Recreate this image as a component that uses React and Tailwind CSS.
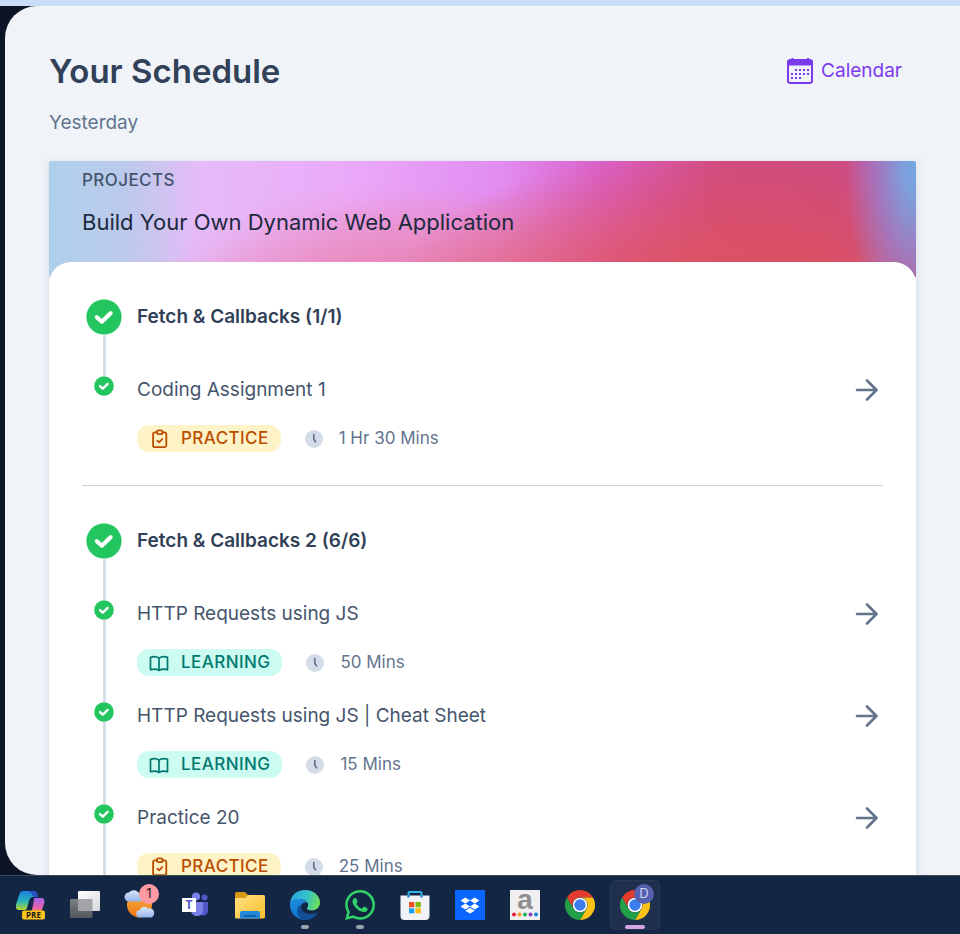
import React from "react";

const sections = [
  {
    title: "Fetch & Callbacks (1/1)",
    items: [{ title: "Coding Assignment 1", kind: "practice", time: "1 Hr 30 Mins" }],
  },
  {
    title: "Fetch & Callbacks 2 (6/6)",
    items: [
      { title: "HTTP Requests using JS", kind: "learning", time: "50 Mins" },
      { title: "HTTP Requests using JS | Cheat Sheet", kind: "learning", time: "15 Mins" },
      { title: "Practice 20", kind: "practice", time: "25 Mins" },
    ],
  },
];

function CalendarIcon() {
  const dots = [
    [9, 12], [13, 12], [17, 12], [21, 12],
    [5, 16], [9, 16], [13, 16], [17, 16], [21, 16],
    [5, 20], [9, 20], [13, 20],
  ];
  return (
    <svg viewBox="0 0 26 26" className="h-[26px] w-[26px]" aria-hidden="true">
      <rect x="1" y="2" width="24" height="23" rx="2.5" fill="none" stroke="#7c3aed" strokeWidth="2" />
      <path d="M0 7.500V4a2.500 2.500 0 0 1 2.500-2.500h21A2.500 2.500 0 0 1 26 4v3.500z" fill="#7c3aed" />
      <path d="M5.500 0v3M21 0v3" stroke="#7c3aed" strokeWidth="2" />
      {dots.map(([x, y]) => (
        <rect key={x + "-" + y} x={x - 1} y={y - 1} width="2" height="2" fill="#7c3aed" />
      ))}
    </svg>
  );
}

function Check({ className }) {
  return (
    <svg viewBox="0 0 36 36" className={className} aria-hidden="true">
      <circle cx="18" cy="18" r="17.6" fill="#22c55e" />
      <path d="M10.800 18.200l5 4.600 8.800-8.600" fill="none" stroke="#fff" strokeWidth="4.200" strokeLinecap="round" strokeLinejoin="round" />
    </svg>
  );
}

function ClipboardIcon() {
  return (
    <svg viewBox="0 0 18 20" className="h-5 w-[18px]" fill="none" stroke="currentColor" strokeWidth="1.800" strokeLinecap="round" strokeLinejoin="round" aria-hidden="true">
      <path d="M5.800 3.300H3.900A1.800 1.800 0 0 0 2.100 5.100v11.300a1.800 1.800 0 0 0 1.800 1.800h9.600a1.800 1.800 0 0 0 1.800-1.800V5.100a1.800 1.800 0 0 0-1.800-1.800h-1.900" />
      <rect x="5.800" y="1.300" width="5.800" height="3.800" rx="1.700" />
      <path d="M6.300 11.600l1.800 1.800 3.200-3.400" />
    </svg>
  );
}

function BookIcon() {
  return (
    <svg viewBox="0 0 20 18" className="h-[18px] w-5" fill="none" stroke="currentColor" strokeWidth="1.700" strokeLinejoin="round" aria-hidden="true">
      <path d="M10 4.200C8 2.600 4 2.400 1.500 3.200v12.600c2.500-.8 6.500-.6 8.500.6 2-1.200 6-1.400 8.500-.6V3.200C16 2.400 12 2.600 10 4.200zM10 4.200v12.200" />
    </svg>
  );
}

function ClockIcon() {
  return (
    <svg viewBox="0 0 18 18" className="h-[18px] w-[18px]" aria-hidden="true">
      <circle cx="9" cy="9" r="9" fill="#d3dce8" />
      <path d="M8.800 4.500v5l1.800 2.300" fill="none" stroke="#64748b" strokeWidth="1.700" strokeLinecap="round" strokeLinejoin="round" />
    </svg>
  );
}

function ArrowIcon() {
  return (
    <svg viewBox="0 0 24 24" className="h-6 w-6" fill="none" stroke="#64748b" strokeWidth="2.600" strokeLinecap="round" strokeLinejoin="round" aria-hidden="true">
      <path d="M2 12h19.500M12 2.500l9.500 9.500-9.500 9.500" />
    </svg>
  );
}

function Badge({ kind }) {
  const practice = kind === "practice";
  return (
    <span
      className={
        "flex h-[27px] items-center gap-3 rounded-xl text-[17px] font-medium tracking-wide " +
        (practice ? "bg-amber-100 pr-3 pl-3.5 text-amber-700" : "bg-teal-100 pr-3 pl-3 text-teal-700")
      }
    >
      {practice ? <ClipboardIcon /> : <BookIcon />}
      {practice ? "PRACTICE" : "LEARNING"}
    </span>
  );
}

function Item({ item, last }) {
  return (
    <li className="flex">
      <div className="flex w-11 shrink-0 flex-col items-center">
        <Check className="h-5 w-5" />
        {!last && <span className="w-[3px] flex-1 bg-[#d6dee8]" />}
      </div>
      <div className={"min-w-0 flex-1 pl-[11px] " + (last ? "" : "pb-[26px]")}>
        <div className="flex h-7 items-center justify-between pr-1">
          <h4 className="text-[19px] leading-7 text-slate-600">{item.title}</h4>
          <a href="#item" aria-label={"Open " + item.title}>
            <ArrowIcon />
          </a>
        </div>
        <div className="mt-[21px] flex items-center gap-6">
          <Badge kind={item.kind} />
          <span className="flex items-center gap-4 text-[17px] leading-[27px] text-slate-500">
            <ClockIcon />
            {item.time}
          </span>
        </div>
      </div>
    </li>
  );
}

function Section({ section, open }) {
  return (
    <section className={"pt-[37px] " + (open ? "" : "border-b border-[#cfd0d3] pb-[33px]")}>
      <div className="flex h-[77px]">
        <div className="flex w-11 shrink-0 flex-col items-center">
          <Check className="h-9 w-9" />
          <span className="w-[3px] flex-1 bg-[#d6dee8]" />
        </div>
        <h3 className="pl-[11px] text-[19px] leading-9 font-semibold text-slate-700">{section.title}</h3>
      </div>
      <ul>
        {section.items.map((item, i) => (
          <Item key={item.title} item={item} last={!open && i === section.items.length - 1} />
        ))}
      </ul>
    </section>
  );
}

function CopilotIcon() {
  return (
    <svg viewBox="0 0 32 32" className="h-8 w-8" aria-hidden="true">
      <defs>
        <linearGradient id="cpA" x1="0" y1="0" x2="0" y2="1">
          <stop offset="0" stopColor="#1c7fe0" />
          <stop offset="0.550" stopColor="#2bb5b8" />
          <stop offset="1" stopColor="#b9d630" />
        </linearGradient>
        <linearGradient id="cpB" x1="0" y1="0" x2="0" y2="1">
          <stop offset="0" stopColor="#a566f0" />
          <stop offset="0.600" stopColor="#e360b0" />
          <stop offset="1" stopColor="#f58a50" />
        </linearGradient>
      </defs>
      <path d="M9 2h10c3 0 4 2 5 6h-5c-2 0-3 1-4 4l-2 7c-.6 1.500-1.500 2-3 2H5c-3 0-3.600-2.500-2.800-6L5 6c.8-2.500 2-4 4-4z" fill="url(#cpA)" />
      <path d="M14 2h5c3 0 4 2 5 6h-4c-2-1-2-5-6-6z" fill="#2450c8" />
      <path d="M20 9h7c3 0 4 2 3.300 5L28 21c-.6 2-2 3-4 3h-7c1-2 3-13 3-15z" fill="url(#cpB)" />
      <rect x="8" y="21.500" width="23" height="9" rx="2" fill="#fcc419" />
      <text x="19.500" y="29" textAnchor="middle" fontSize="8" fontWeight="700" fontFamily="Open Sans, sans-serif" fill="#1b1b1b">PRE</text>
    </svg>
  );
}

function TaskViewIcon() {
  return (
    <svg viewBox="0 0 30 30" className="h-[30px] w-[30px]" aria-hidden="true">
      <defs>
        <linearGradient id="tvA" x1="0" y1="0" x2="1" y2="1">
          <stop offset="0" stopColor="#ffffff" />
          <stop offset="1" stopColor="#d5d7da" />
        </linearGradient>
        <linearGradient id="tvB" x1="0" y1="0" x2="0" y2="1">
          <stop offset="0" stopColor="#7c7e82" />
          <stop offset="1" stopColor="#54575c" />
        </linearGradient>
      </defs>
      <rect x="0" y="9" width="22.500" height="19" rx="1" fill="url(#tvB)" />
      <rect x="8" y="1" width="22" height="20" rx="1" fill="url(#tvA)" />
      <path d="M8 9h14.500v12H8z" fill="#a2a4a7" />
    </svg>
  );
}

function WeatherIcon() {
  return (
    <svg viewBox="0 0 32 32" className="h-8 w-8" aria-hidden="true">
      <defs>
        <linearGradient id="wA" x1="0" y1="0" x2="0" y2="1">
          <stop offset="0" stopColor="#fbb040" />
          <stop offset="1" stopColor="#ea7718" />
        </linearGradient>
        <linearGradient id="wB" x1="0" y1="0" x2="0" y2="1">
          <stop offset="0" stopColor="#dbe8fb" />
          <stop offset="1" stopColor="#94b5ea" />
        </linearGradient>
      </defs>
      <circle cx="15.500" cy="16" r="12.500" fill="url(#wA)" />
      <path d="M5 12.500a4.500 4.500 0 0 1 0-9A6 6 0 0 1 15 4.500a4 4 0 0 1 1 8z" fill="url(#wB)" />
      <path d="M16 28.500a3.700 3.700 0 0 1 0-7.400 4.500 4.500 0 0 1 8-1.500 4.500 4.500 0 0 1 3 8.900z" fill="url(#wB)" />
    </svg>
  );
}

function TeamsIcon() {
  return (
    <svg viewBox="0 0 30 30" className="h-[30px] w-[30px]" aria-hidden="true">
      <circle cx="16" cy="6.500" r="4" fill="#7b83eb" />
      <circle cx="24.500" cy="7.500" r="3" fill="#5059c9" />
      <path d="M19 12h9v8.500a5 5 0 0 1-9 3z" fill="#5059c9" />
      <path d="M11 12h12v8c0 4-3 6-6 6s-6-2-6-6z" fill="#7b83eb" />
      <rect x="2" y="8" width="14" height="14" rx="0.500" fill="#fff" />
      <text x="9" y="19" textAnchor="middle" fontSize="12" fontWeight="700" fontFamily="Open Sans, sans-serif" fill="#5059c9">T</text>
    </svg>
  );
}

function FolderIcon() {
  return (
    <svg viewBox="0 0 30 30" className="h-[30px] w-[30px]" aria-hidden="true">
      <defs>
        <linearGradient id="fA" x1="0" y1="0" x2="1" y2="1">
          <stop offset="0" stopColor="#ffe083" />
          <stop offset="1" stopColor="#fbc02f" />
        </linearGradient>
      </defs>
      <path d="M0 4a2 2 0 0 1 2-2h8l3 3h15a2 2 0 0 1 2 2v4H0z" fill="#d99a13" />
      <path d="M0 8h10l3-3h15a2 2 0 0 1 2 2v20a1.500 1.500 0 0 1-1.500 1.500h-27A1.500 1.500 0 0 1 0 27z" fill="url(#fA)" />
      <path d="M5 28.500V23a2 2 0 0 1 2-2h16a2 2 0 0 1 2 2v5.500z" fill="#2386d8" />
      <rect x="9" y="25" width="12" height="1.800" rx="0.900" fill="#0f5ca6" />
    </svg>
  );
}

function EdgeIcon() {
  return (
    <svg viewBox="0 0 30 30" className="h-[30px] w-[30px]" aria-hidden="true">
      <defs>
        <linearGradient id="eA" x1="0" y1="0.300" x2="1" y2="0.500">
          <stop offset="0" stopColor="#2aa5e0" />
          <stop offset="0.550" stopColor="#35c1c8" />
          <stop offset="1" stopColor="#6fe05a" />
        </linearGradient>
        <linearGradient id="eB" x1="0" y1="0" x2="0.500" y2="1">
          <stop offset="0" stopColor="#1c8fe0" />
          <stop offset="1" stopColor="#1173cf" />
        </linearGradient>
      </defs>
      <path d="M0 13C1 5 7 0 15 0c9 0 15 6 15 12.500 0 5-4 8-8.500 8-4 0-5-1.500-4.500-2.500 1-1.500 1.500-3 .5-5C15 8.500 5 7 0 13z" fill="url(#eA)" />
      <path d="M0 13c4-6 14-5 17.500 0-3-1.500-6.500.5-7 4.500-.5 5 3 9.500 9.500 9.500-2 2-4 3-6 3C6 29 0 23 0 15z" fill="url(#eB)" />
      <path d="M10.500 14.500c0 6.500 4 9.500 10 9.500 3.500 0 6.500-2 7-1.500.8.700-4.500 7.500-12 7.500-8 0-11-11-5-15.500z" fill="#134f96" />
      <path d="M17.500 13c1 2 .5 3.500-.5 5-.5 1 .5 2.500 4.500 2.500l-4 1.500c-4-1-6-4-5-6.500.7-2 3-3 5-2.500z" fill="#132745" />
    </svg>
  );
}

function WhatsAppIcon() {
  return (
    <svg viewBox="0 0 24 24" className="h-[30px] w-[30px]" fill="#2fd366" aria-hidden="true">
      <path d="M17.472 14.382c-.297-.149-1.758-.867-2.030-.967-.273-.099-.471-.148-.670.150-.197.297-.767.966-.940 1.164-.173.199-.347.223-.644.075-.297-.150-1.255-.463-2.390-1.475-.883-.788-1.480-1.761-1.653-2.059-.173-.297-.018-.458.130-.606.134-.133.298-.347.446-.520.149-.174.198-.298.298-.497.099-.198.050-.371-.025-.520-.075-.149-.669-1.612-.916-2.207-.242-.579-.487-.500-.669-.510-.173-.008-.371-.010-.570-.010-.198 0-.520.074-.792.372-.272.297-1.040 1.016-1.040 2.479 0 1.462 1.065 2.875 1.213 3.074.149.198 2.096 3.200 5.077 4.487.709.306 1.262.489 1.694.625.712.227 1.360.195 1.871.118.571-.085 1.758-.719 2.006-1.413.248-.694.248-1.289.173-1.413-.074-.124-.272-.198-.570-.347m-5.421 7.403h-.004a9.870 9.870 0 0 1-5.031-1.378l-.361-.214-3.741.982.998-3.648-.235-.374a9.860 9.860 0 0 1-1.510-5.260c.001-5.450 4.436-9.884 9.888-9.884 2.640 0 5.122 1.030 6.988 2.898a9.825 9.825 0 0 1 2.893 6.994c-.003 5.450-4.437 9.884-9.885 9.884m8.413-18.297A11.815 11.815 0 0 0 12.050 0C5.495 0 .160 5.335.157 11.892c0 2.096.547 4.142 1.588 5.945L.057 24l6.305-1.654a11.882 11.882 0 0 0 5.683 1.448h.005c6.554 0 11.890-5.335 11.893-11.893a11.821 11.821 0 0 0-3.480-8.413z" />
    </svg>
  );
}

function StoreIcon() {
  return (
    <svg viewBox="0 0 30 30" className="h-[30px] w-[30px]" aria-hidden="true">
      <path d="M.5 5.500h29V26a4 4 0 0 1-4 4h-21a4 4 0 0 1-4-4z" fill="#f1f3f6" />
      <path d="M8.500 7V3a1 1 0 0 1 1-1h11a1 1 0 0 1 1 1v4" fill="none" stroke="#35b3ea" strokeWidth="2" />
      <path d="M8.500 7.500V5.500M21.500 7.500V5.500" stroke="#1a7fc4" strokeWidth="2" />
      <path d="M9 12h5.300v5.300H9z" fill="#f25022" />
      <path d="M15.500 12h5.300v5.300h-5.300z" fill="#7fba00" />
      <path d="M9 18.300h5.300v5H9z" fill="#1a9ff0" />
      <path d="M15.500 18.300h5.300v5h-5.300z" fill="#ffb900" />
    </svg>
  );
}

function DropboxIcon() {
  return (
    <svg viewBox="0 0 30 30" className="h-[30px] w-[30px]" aria-hidden="true">
      <rect width="30" height="30" fill="#0a66ff" />
      <path d="M10.300 7.500l4.700 3-4.700 3-4.700-3zM19.700 7.500l4.700 3-4.700 3-4.700-3zM10.300 13.500l4.700 3-4.700 3-4.700-3zM19.700 13.500l4.700 3-4.700 3-4.700-3zM15 17.700l4.700 3-4.700 2.800-4.700-2.800z" fill="#fff" />
    </svg>
  );
}

function LetterAIcon() {
  const colors = ["#e01b3c", "#f39a2b", "#1fae62", "#8a3fc0", "#1582d8"];
  return (
    <svg viewBox="0 0 30 30" className="h-[30px] w-[30px] overflow-visible" aria-hidden="true">
      <rect width="30" height="30" fill="#f0f0f0" />
      <text x="15" y="19" textAnchor="middle" fontSize="28" fontWeight="700" fontFamily="Liberation Sans, Arial, sans-serif" fill="#8f8f8f">a</text>
      {colors.map((c, i) => (
        <circle key={c} cx={4 + i * 5.5} cy="24.500" r="2" fill={c} />
      ))}
    </svg>
  );
}

function ChromeIcon() {
  return (
    <svg viewBox="0 0 30 30" className="h-[30px] w-[30px]" aria-hidden="true">
      <path d="M15 0a15 15 0 0 1 13 7.500H15a7.500 7.500 0 0 0-6.500 11.250L2 7.500A15 15 0 0 1 15 0z" fill="#e33b2e" />
      <path d="M28 7.500A15 15 0 0 1 15 30l6.500-11.250A7.500 7.500 0 0 0 15 7.500z" fill="#fbc116" />
      <path d="M2 7.500a15 15 0 0 0 13 22.500l6.500-11.250A7.500 7.500 0 0 1 8.500 18.750z" fill="#23a047" />
      <circle cx="15" cy="15" r="7.300" fill="#fff" />
      <circle cx="15" cy="15" r="5.700" fill="#3b7ded" />
    </svg>
  );
}

const apps = [
  { name: "Copilot", Icon: CopilotIcon },
  { name: "Task view", Icon: TaskViewIcon },
  { name: "Weather", Icon: WeatherIcon, badge: "1", badgeStyle: "bg-[#ff99a4] text-[#1b1b1b]" },
  { name: "Teams", Icon: TeamsIcon },
  { name: "File Explorer", Icon: FolderIcon },
  { name: "Edge", Icon: EdgeIcon, running: true },
  { name: "WhatsApp", Icon: WhatsAppIcon, running: true },
  { name: "Store", Icon: StoreIcon },
  { name: "Dropbox", Icon: DropboxIcon },
  { name: "Shopping", Icon: LetterAIcon },
  { name: "Chrome", Icon: ChromeIcon },
  { name: "Chrome profile", Icon: ChromeIcon, active: true, badge: "D", badgeStyle: "bg-[#5560ae] text-[#cfd3f2]" },
];

function Taskbar() {
  return (
    <nav aria-label="Taskbar" className="flex h-[59px] shrink-0 items-start gap-[5px] border-t border-[#3a4a55] bg-[#132745] pt-1 pl-[5px]">
      {apps.map(({ name, Icon, running, active, badge, badgeStyle }) => (
        <button
          key={name}
          type="button"
          aria-label={name}
          className={
            "relative flex h-[50px] w-[50px] items-center justify-center rounded-[5px] border " +
            (active ? "border-[#263852] bg-[#1e304c]" : "border-transparent")
          }
        >
          <Icon />
          {badge && (
            <span className={"absolute top-[3px] right-[5px] flex h-5 w-5 items-center justify-center rounded-full text-[13px] " + badgeStyle}>
              {badge}
            </span>
          )}
          {running && <span className="absolute bottom-0 h-1 w-2 rounded-full bg-[#9aa3b1]" />}
          {active && <span className="absolute bottom-0 h-1 w-5 rounded-full bg-[#d6a3e3]" />}
        </button>
      ))}
    </nav>
  );
}

export default function App() {
  return (
    <div className="flex h-screen flex-col overflow-hidden bg-[#0b1526] font-['Inter','Noto_Sans',sans-serif]">
      <div className="h-1.5 shrink-0 bg-[#cbdcf7]" />
      <main className="ml-[5px] min-h-0 flex-1 overflow-hidden rounded-l-[32px] bg-[#f0f4f9] px-11 pt-[43px]">
        <header className="flex items-center justify-between pr-3.5">
          <h1 className="text-[33px] leading-[44px] font-semibold text-slate-700">Your Schedule</h1>
          <a href="#calendar" className="flex items-center gap-2 text-[19px] leading-[26px] text-[#7c3aed]">
            <CalendarIcon />
            Calendar
          </a>
        </header>
        <h2 className="mt-[17px] text-[19px] leading-[26px] text-slate-500">Yesterday</h2>
        <article className="mt-[25px] rounded-t-[2px] shadow-[0_2px_10px_rgba(100,116,139,0.2)]">
          <div className="h-[116px] rounded-t-[2px] bg-[radial-gradient(70px_190px_at_100%_0%,#74a8e4_0%,rgba(122,162,222,0.95)_20%,rgba(150,130,205,0.75)_55%,rgba(200,75,145,0)_100%),radial-gradient(350px_150px_at_80%_115%,#de5058_0%,rgba(220,80,98,0.8)_40%,rgba(210,80,130,0)_100%),radial-gradient(330px_125px_at_52%_130%,rgba(230,120,150,0.95)_0%,rgba(232,125,175,0.6)_50%,rgba(235,150,215,0)_100%),radial-gradient(230px_130px_at_38%_130%,rgba(234,145,180,0.95)_0%,rgba(235,155,205,0.6)_60%,rgba(235,160,220,0)_100%),linear-gradient(92deg,#aed0ea_0%,#bccaec_9%,#cdc4f0_13%,#e5bbf8_17%,#ebaaf9_34%,#e18cf1_52%,#da60c8_64%,#d04c84_77%,#cc4b82_90%,#c850a0_96%,#c050a0_100%)] px-[33px] pt-[9px]">
            <p className="text-[17px] leading-5 font-medium tracking-wide text-slate-600">PROJECTS</p>
            <p className="mt-[18px] text-[22px] leading-7 text-slate-800">Build Your Own Dynamic Web Application</p>
          </div>
          <div className="-mt-[15px] rounded-t-[22px] bg-white px-[33px]">
            {sections.map((section, i) => (
              <Section key={section.title} section={section} open={i === sections.length - 1} />
            ))}
          </div>
        </article>
      </main>
      <Taskbar />
    </div>
  );
}
